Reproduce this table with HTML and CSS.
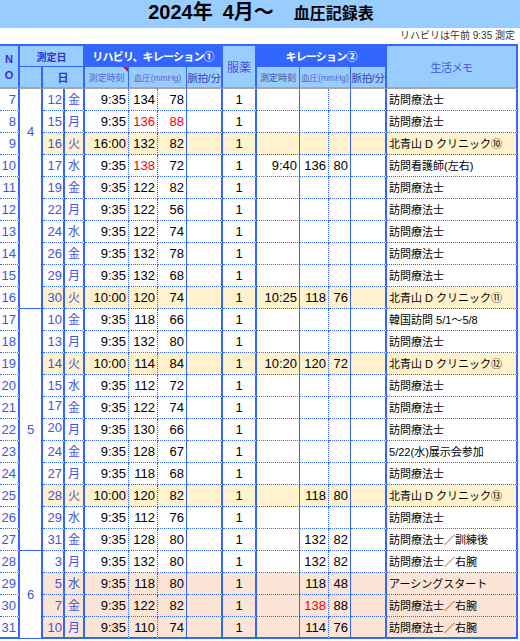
FILE: index.html
```html
<!DOCTYPE html>
<html lang="ja">
<head>
<meta charset="utf-8">
<title>血圧記録表</title>
<link rel="stylesheet" href="styles.css">
</head>
<body>
<div class="title"><span class="t1">2024年<span class="t1m">4月～</span></span><span class="t2">血圧記録表</span></div>
<div class="sub">リハビリは午前 9:35 測定</div>
<table class="sheet">
<colgroup>
<col class="c-no"><col class="c-mon"><col class="c-day"><col class="c-wd">
<col class="c-t1"><col class="c-s1"><col class="c-d1"><col class="c-p1">
<col class="c-med">
<col class="c-t2"><col class="c-s2"><col class="c-d2"><col class="c-p2">
<col class="c-memo">
</colgroup>
<thead>
<tr class="h1">
<th class="hno" rowspan="2">N<br>O</th>
<th class="hdate" colspan="3">測定日</th>
<th class="hgrp" colspan="4">リハビリ、キレーション①</th>
<th class="hmed" rowspan="2">服薬</th>
<th class="hgrp" colspan="4">キレーション②</th>
<th class="hmemo" rowspan="2">生活メモ</th>
</tr>
<tr class="h2">
<th class="hmon"></th>
<th class="hday" colspan="2">日</th>
<th class="hsub hs-time cmt">測定時刻</th>
<th class="hsub hs-bp" colspan="2">血圧(mmHg)</th>
<th class="hsub hs-pulse">脈拍/分</th>
<th class="hsub hs-time hs-time2">測定時刻</th>
<th class="hsub hs-bp" colspan="2">血圧(mmHg)</th>
<th class="hsub hs-pulse">脈拍/分</th>
</tr>
</thead>
<tbody>
<tr><td class="no">7</td><td class="mon mon4" rowspan="10">4</td><td class="day">12</td><td class="wd">金</td><td class="t1">9:35</td><td class="s1">134</td><td class="d1">78</td><td class="p1"></td><td class="med">1</td><td class="t2"></td><td class="s2"></td><td class="d2"></td><td class="p2"></td><td class="memo">訪問療法士</td></tr>
<tr><td class="no">8</td><td class="day">15</td><td class="wd">月</td><td class="t1">9:35</td><td class="s1 red">136</td><td class="d1 red">88</td><td class="p1"></td><td class="med">1</td><td class="t2"></td><td class="s2"></td><td class="d2"></td><td class="p2"></td><td class="memo">訪問療法士</td></tr>
<tr class="hy"><td class="no">9</td><td class="day">16</td><td class="wd">火</td><td class="t1">16:00</td><td class="s1">132</td><td class="d1">82</td><td class="p1"></td><td class="med">1</td><td class="t2"></td><td class="s2"></td><td class="d2"></td><td class="p2"></td><td class="memo">北青山 D クリニック⑩</td></tr>
<tr><td class="no">10</td><td class="day">17</td><td class="wd">水</td><td class="t1">9:35</td><td class="s1 red">138</td><td class="d1">72</td><td class="p1"></td><td class="med">1</td><td class="t2">9:40</td><td class="s2">136</td><td class="d2">80</td><td class="p2"></td><td class="memo">訪問看護師(左右)</td></tr>
<tr><td class="no">11</td><td class="day">19</td><td class="wd">金</td><td class="t1">9:35</td><td class="s1">122</td><td class="d1">82</td><td class="p1"></td><td class="med">1</td><td class="t2"></td><td class="s2"></td><td class="d2"></td><td class="p2"></td><td class="memo">訪問療法士</td></tr>
<tr><td class="no">12</td><td class="day">22</td><td class="wd">月</td><td class="t1">9:35</td><td class="s1">122</td><td class="d1">56</td><td class="p1"></td><td class="med">1</td><td class="t2"></td><td class="s2"></td><td class="d2"></td><td class="p2"></td><td class="memo">訪問療法士</td></tr>
<tr><td class="no">13</td><td class="day">24</td><td class="wd">水</td><td class="t1">9:35</td><td class="s1">122</td><td class="d1">74</td><td class="p1"></td><td class="med">1</td><td class="t2"></td><td class="s2"></td><td class="d2"></td><td class="p2"></td><td class="memo">訪問療法士</td></tr>
<tr><td class="no">14</td><td class="day">26</td><td class="wd">金</td><td class="t1">9:35</td><td class="s1">132</td><td class="d1">78</td><td class="p1"></td><td class="med">1</td><td class="t2"></td><td class="s2"></td><td class="d2"></td><td class="p2"></td><td class="memo">訪問療法士</td></tr>
<tr><td class="no">15</td><td class="day">29</td><td class="wd">月</td><td class="t1">9:35</td><td class="s1">132</td><td class="d1">68</td><td class="p1"></td><td class="med">1</td><td class="t2"></td><td class="s2"></td><td class="d2"></td><td class="p2"></td><td class="memo">訪問療法士</td></tr>
<tr class="hy"><td class="no">16</td><td class="day">30</td><td class="wd">火</td><td class="t1">10:00</td><td class="s1">120</td><td class="d1">74</td><td class="p1"></td><td class="med">1</td><td class="t2">10:25</td><td class="s2">118</td><td class="d2">76</td><td class="p2"></td><td class="memo">北青山 D クリニック⑪</td></tr>
<tr><td class="no">17</td><td class="mon" rowspan="11">5</td><td class="day">10</td><td class="wd">金</td><td class="t1">9:35</td><td class="s1">118</td><td class="d1">66</td><td class="p1"></td><td class="med">1</td><td class="t2"></td><td class="s2"></td><td class="d2"></td><td class="p2"></td><td class="memo">韓国訪問 5/1～5/8</td></tr>
<tr><td class="no">18</td><td class="day">13</td><td class="wd">月</td><td class="t1">9:35</td><td class="s1">132</td><td class="d1">80</td><td class="p1"></td><td class="med">1</td><td class="t2"></td><td class="s2"></td><td class="d2"></td><td class="p2"></td><td class="memo">訪問療法士</td></tr>
<tr class="hy"><td class="no">19</td><td class="day">14</td><td class="wd">火</td><td class="t1">10:00</td><td class="s1">114</td><td class="d1">84</td><td class="p1"></td><td class="med">1</td><td class="t2">10:20</td><td class="s2">120</td><td class="d2">72</td><td class="p2"></td><td class="memo">北青山 D クリニック⑫</td></tr>
<tr><td class="no">20</td><td class="day">15</td><td class="wd">水</td><td class="t1">9:35</td><td class="s1">112</td><td class="d1">72</td><td class="p1"></td><td class="med">1</td><td class="t2"></td><td class="s2"></td><td class="d2"></td><td class="p2"></td><td class="memo">訪問療法士</td></tr>
<tr><td class="no">21</td><td class="day up">17</td><td class="wd">金</td><td class="t1">9:35</td><td class="s1">122</td><td class="d1">74</td><td class="p1"></td><td class="med">1</td><td class="t2"></td><td class="s2"></td><td class="d2"></td><td class="p2"></td><td class="memo">訪問療法士</td></tr>
<tr><td class="no">22</td><td class="day up">20</td><td class="wd">月</td><td class="t1">9:35</td><td class="s1">130</td><td class="d1">66</td><td class="p1"></td><td class="med">1</td><td class="t2"></td><td class="s2"></td><td class="d2"></td><td class="p2"></td><td class="memo">訪問療法士</td></tr>
<tr><td class="no">23</td><td class="day">24</td><td class="wd">金</td><td class="t1">9:35</td><td class="s1">128</td><td class="d1">67</td><td class="p1"></td><td class="med">1</td><td class="t2"></td><td class="s2"></td><td class="d2"></td><td class="p2"></td><td class="memo">5/22(水)展示会参加</td></tr>
<tr><td class="no">24</td><td class="day">27</td><td class="wd">月</td><td class="t1">9:35</td><td class="s1">118</td><td class="d1">68</td><td class="p1"></td><td class="med">1</td><td class="t2"></td><td class="s2"></td><td class="d2"></td><td class="p2"></td><td class="memo">訪問療法士</td></tr>
<tr class="hy"><td class="no">25</td><td class="day">28</td><td class="wd">火</td><td class="t1">10:00</td><td class="s1">120</td><td class="d1">82</td><td class="p1"></td><td class="med">1</td><td class="t2"></td><td class="s2">118</td><td class="d2">80</td><td class="p2"></td><td class="memo">北青山 D クリニック⑬</td></tr>
<tr><td class="no">26</td><td class="day">29</td><td class="wd">水</td><td class="t1">9:35</td><td class="s1">112</td><td class="d1">76</td><td class="p1"></td><td class="med">1</td><td class="t2"></td><td class="s2"></td><td class="d2"></td><td class="p2"></td><td class="memo">訪問療法士</td></tr>
<tr><td class="no">27</td><td class="day">31</td><td class="wd">金</td><td class="t1">9:35</td><td class="s1">128</td><td class="d1">80</td><td class="p1"></td><td class="med">1</td><td class="t2"></td><td class="s2">132</td><td class="d2">82</td><td class="p2"></td><td class="memo">訪問療法士／訓練後</td></tr>
<tr><td class="no">28</td><td class="mon" rowspan="4">6</td><td class="day">3</td><td class="wd">月</td><td class="t1">9:35</td><td class="s1">132</td><td class="d1">80</td><td class="p1"></td><td class="med">1</td><td class="t2"></td><td class="s2">132</td><td class="d2">82</td><td class="p2"></td><td class="memo">訪問療法士／右腕</td></tr>
<tr class="hp"><td class="no">29</td><td class="day">5</td><td class="wd">水</td><td class="t1">9:35</td><td class="s1">118</td><td class="d1">80</td><td class="p1"></td><td class="med">1</td><td class="t2"></td><td class="s2">118</td><td class="d2">48</td><td class="p2"></td><td class="memo">アーシングスタート</td></tr>
<tr class="hp"><td class="no">30</td><td class="day">7</td><td class="wd">金</td><td class="t1">9:35</td><td class="s1">122</td><td class="d1">82</td><td class="p1"></td><td class="med">1</td><td class="t2"></td><td class="s2 red">138</td><td class="d2">88</td><td class="p2"></td><td class="memo">訪問療法士／右腕</td></tr>
<tr class="hp last"><td class="no">31</td><td class="day">10</td><td class="wd">月</td><td class="t1">9:35</td><td class="s1">110</td><td class="d1">74</td><td class="p1"></td><td class="med">1</td><td class="t2"></td><td class="s2">114</td><td class="d2">76</td><td class="p2"></td><td class="memo">訪問療法士／右腕</td></tr>
</tbody>
</table>
</body>
</html>
```
FILE: styles.css
```css
html, body {
  margin: 0;
  padding: 0;
  background: #ffffff;
}
body {
  width: 520px;
  font-family: "Liberation Sans", "Noto Sans CJK JP", sans-serif;
  color: #000;
}
.title {
  height: 28px;
  line-height: 24px;
  background: #99ccff;
  text-align: center;
  font-weight: bold;
  white-space: nowrap;
  padding-left: 2px;
  box-sizing: border-box;
}
.t1 {
  font-size: 20px;
}
.t1m {
  margin-left: 10px;
}
.t2 {
  font-size: 16px;
  margin-left: 20px;
}
.sub {
  height: 16px;
  line-height: 13px;
  font-size: 10px;
  color: #333;
  text-align: right;
  padding-right: 5px;
  padding-top: 1px;
  box-sizing: border-box;
}
.sheet {
  width: 518px;
  table-layout: fixed;
  border-collapse: separate;
  border-spacing: 0;
}
.c-no { width: 20px; }
.c-mon { width: 23px; }
.c-day { width: 22px; }
.c-wd { width: 20px; }
.c-t1 { width: 44px; }
.c-s1 { width: 29px; }
.c-d1 { width: 29px; }
.c-p1 { width: 36px; }
.c-med { width: 34px; }
.c-t2 { width: 43px; }
.c-s2 { width: 29px; }
.c-d2 { width: 22px; }
.c-p2 { width: 36px; }
.c-memo { width: 131px; }

.sheet th, .sheet td {
  padding: 0;
  overflow: hidden;
  white-space: nowrap;
  font-weight: normal;
}

/* header */
.h1 { height: 23px; }
.h2 { height: 22px; }
.sheet th {
  background: #99ccff;
  color: #3333cc;
  text-align: center;
  vertical-align: middle;
}
.h1 th {
  border-top: 2px solid #3366ff;
  border-right: 2px solid #3366ff;
}
.hno {
  font-size: 11px;
  font-weight: bold !important;
  line-height: 16px;
  border-bottom: 2px solid #a6a6a6;
  padding-top: 1px !important;
}
.hdate {
  font-size: 10px;
  font-weight: bold !important;
  border-bottom: 1px solid #3366ff;
}
.hgrp {
  background: #3366ff !important;
  color: #ffffff !important;
  font-size: 11px;
  font-weight: bold !important;
  letter-spacing: -0.8px;
  border-bottom: 1px solid #3366ff;
}
.hmed {
  font-size: 12px;
  color: #4455dd !important;
  border-bottom: 2px solid #a6a6a6;
}
.hmemo {
  font-size: 11px;
  color: #4455dd !important;
  letter-spacing: -0.5px;
  border-bottom: 2px solid #a6a6a6;
}
.h2 th {
  border-bottom: 2px solid #a6a6a6;
}
.hmon {
  border-right: 2px solid #3366ff;
}
.hday {
  font-size: 11px;
  font-weight: bold !important;
  border-right: 2px solid #3366ff;
}
.hsub {
  color: #5566cc !important;
}
.hs-time {
  font-size: 9px;
  border-right: 1px solid #3366ff;
  position: relative;
}
.hs-time2 {
  color: #4455aa !important;
}
.hs-bp {
  font-size: 8.5px;
  border-right: 1px solid #3366ff;
}
.hs-pulse {
  font-size: 10.5px;
  color: #3344aa !important;
  letter-spacing: -0.3px;
  border-right: 2px solid #3366ff;
}
.cmt::after {
  content: "";
  position: absolute;
  top: 0;
  right: 0;
  border-top: 5px solid #ff0000;
  border-left: 5px solid transparent;
}

/* body */
.sheet tbody tr { height: 22px; }
.sheet td {
  font-size: 13px;
  line-height: 16px;
  padding-top: 1px;
  border-bottom: 1px dotted #3366ff;
  text-align: right;
  padding-right: 2px;
  vertical-align: middle;
}
.sheet td.no {
  color: #3f55e0;
  border-right: 2px solid #3366ff;
  padding-right: 2px;
}
.sheet td.mon {
  color: #3f55e0;
  text-align: center;
  padding-right: 0;
  border-right: 2px solid #3366ff;
  border-bottom: 1px solid #3366ff;
  background: #ffffff;
}
.sheet td.mon4 {
  vertical-align: top;
  padding-top: 35px;
}
.sheet td.day {
  color: #3f55e0;
  border-right: 2px solid #3366ff;
  padding-right: 1px;
}
.sheet td.day.up {
  padding-top: 0;
  padding-bottom: 3px;
}
.sheet td.wd {
  color: #3f55e0;
  font-size: 12px;
  text-align: center;
  padding-right: 0;
  border-right: 2px solid #3366ff;
}
.sheet td.t1 { border-right: 1px dotted #3366ff; }
.sheet td.s1 { border-right: 1px dotted #3366ff; }
.sheet td.d1 { border-right: 1px solid #3366ff; }
.sheet td.p1 { border-right: 2px solid #3366ff; }
.sheet td.med {
  text-align: center;
  padding-right: 0;
  border-right: 2px solid #3366ff;
}
.sheet td.t2 { border-right: 1px solid #3366ff; }
.sheet td.s2 { border-right: 1px dotted #3366ff; }
.sheet td.d2 { border-right: 1px solid #3366ff; }
.sheet td.p2 { border-right: 2px solid #3366ff; }
.sheet td.memo {
  text-align: left;
  font-size: 11px;
  padding-left: 2px;
  padding-right: 0;
  border-right: 2px solid #3366ff;
}
.sheet td.red { color: #ff0000; }

.hy td { background: #fff2cc; }
.hp td { background: #fce4d6; }
.hy td.no, .hp td.no { background: #ffffff; }

.last td {
  border-bottom: 2px solid #3366ff;
}
```
